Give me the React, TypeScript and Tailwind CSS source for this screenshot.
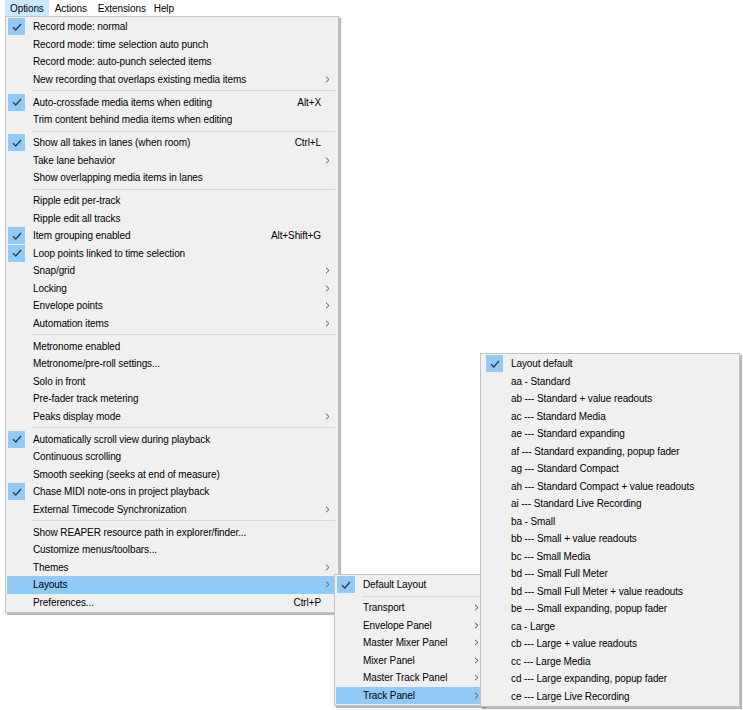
import type { ReactNode } from 'react'

type Item =
  | { sep: true }
  | { sep?: false; label: string; checked?: boolean; shortcut?: string; sub?: boolean; active?: boolean }

const optionsMenu: Item[] = [
  { label: 'Record mode: normal', checked: true },
  { label: 'Record mode: time selection auto punch' },
  { label: 'Record mode: auto-punch selected items' },
  { label: 'New recording that overlaps existing media items', sub: true },
  { sep: true },
  { label: 'Auto-crossfade media items when editing', checked: true, shortcut: 'Alt+X' },
  { label: 'Trim content behind media items when editing' },
  { sep: true },
  { label: 'Show all takes in lanes (when room)', checked: true, shortcut: 'Ctrl+L' },
  { label: 'Take lane behavior', sub: true },
  { label: 'Show overlapping media items in lanes' },
  { sep: true },
  { label: 'Ripple edit per-track' },
  { label: 'Ripple edit all tracks' },
  { label: 'Item grouping enabled', checked: true, shortcut: 'Alt+Shift+G' },
  { label: 'Loop points linked to time selection', checked: true },
  { label: 'Snap/grid', sub: true },
  { label: 'Locking', sub: true },
  { label: 'Envelope points', sub: true },
  { label: 'Automation items', sub: true },
  { sep: true },
  { label: 'Metronome enabled' },
  { label: 'Metronome/pre-roll settings...' },
  { label: 'Solo in front' },
  { label: 'Pre-fader track metering' },
  { label: 'Peaks display mode', sub: true },
  { sep: true },
  { label: 'Automatically scroll view during playback', checked: true },
  { label: 'Continuous scrolling' },
  { label: 'Smooth seeking (seeks at end of measure)' },
  { label: 'Chase MIDI note-ons in project playback', checked: true },
  { label: 'External Timecode Synchronization', sub: true },
  { sep: true },
  { label: 'Show REAPER resource path in explorer/finder...' },
  { label: 'Customize menus/toolbars...' },
  { label: 'Themes', sub: true },
  { label: 'Layouts', sub: true, active: true },
  { label: 'Preferences...', shortcut: 'Ctrl+P' },
]

const layoutsMenu: Item[] = [
  { label: 'Default Layout', checked: true },
  { sep: true },
  { label: 'Transport', sub: true },
  { label: 'Envelope Panel', sub: true },
  { label: 'Master Mixer Panel', sub: true },
  { label: 'Mixer Panel', sub: true },
  { label: 'Master Track Panel', sub: true },
  { label: 'Track Panel', sub: true, active: true },
]

const trackPanelMenu: Item[] = [
  { label: 'Layout default', checked: true },
  { label: 'aa - Standard' },
  { label: 'ab --- Standard + value readouts' },
  { label: 'ac --- Standard Media' },
  { label: 'ae --- Standard expanding' },
  { label: 'af --- Standard expanding, popup fader' },
  { label: 'ag --- Standard Compact' },
  { label: 'ah --- Standard Compact + value readouts' },
  { label: 'ai --- Standard Live Recording' },
  { label: 'ba - Small' },
  { label: 'bb --- Small + value readouts' },
  { label: 'bc --- Small Media' },
  { label: 'bd --- Small Full Meter' },
  { label: 'bd --- Small Full Meter + value readouts' },
  { label: 'be --- Small expanding, popup fader' },
  { label: 'ca - Large' },
  { label: 'cb --- Large + value readouts' },
  { label: 'cc --- Large Media' },
  { label: 'cd --- Large expanding, popup fader' },
  { label: 'ce --- Large Live Recording' },
]

function Check() {
  return (
    <svg width="10" height="8" viewBox="0 0 10 8" fill="none">
      <path d="M1 4.2 L3.8 7 L9 1" stroke="#2d3a4a" strokeWidth="1.3" />
    </svg>
  )
}

function Chevron() {
  return (
    <svg width="5" height="7" viewBox="0 0 5 7" fill="none">
      <path d="M1 0.8 L4 3.5 L1 6.2" stroke="#555" strokeWidth="1" />
    </svg>
  )
}

// Popup menu: check gutter, label, optional shortcut and submenu arrow
function Menu({
  items,
  gutter,
  box,
  arrow,
}: {
  items: Item[]
  gutter: string
  box: string
  arrow: string
}) {
  return (
    <div className="flex flex-col border border-[#c4c4c4] bg-[#f0f0f0] py-px shadow-[2px_2px_1px_rgba(0,0,0,0.28)]">
      {items.map((it, i) =>
        it.sep ? (
          <div key={i} className="flex h-[5.5px] items-center pr-[3px]">
            <div className={`${gutter} shrink-0`} />
            <div className="h-px flex-1 bg-[#d9d9d9]" />
          </div>
        ) : (
          <div
            key={i}
            className={`mx-px flex h-[17.5px] items-center ${it.active ? 'bg-[#91c9f7]' : ''}`}
          >
            <div className={`${gutter} flex h-full shrink-0 items-center`}>
              {it.checked && (
                <div className={`${box} flex h-[17px] items-center justify-center bg-[#91c9f7]`}>
                  <Check />
                </div>
              )}
            </div>
            <span className="flex-1 whitespace-nowrap">{it.label}</span>
            {it.shortcut && <span className="whitespace-nowrap">{it.shortcut}</span>}
            <div className={`flex w-[16px] shrink-0 items-center ${arrow}`}>
              {it.sub && <Chevron />}
            </div>
          </div>
        ),
      )}
    </div>
  )
}

function Pos({ className, children }: { className: string; children: ReactNode }) {
  return <div className={`absolute ${className}`}>{children}</div>
}

export default function App() {
  return (
    <div
      className="relative h-[710px] w-[743px] overflow-hidden bg-white text-[10px] tracking-[-0.1px] text-black"
      style={{ fontFamily: '"Liberation Sans", Arial, sans-serif' }}
    >
      <div className="flex h-[16px] items-center pl-[5px]">
        <div className="flex h-full items-center bg-[#cce8ff] px-[5px]">Options</div>
        <div className="px-[6px]">Actions</div>
        <div className="pl-[5px] pr-[3px]">Extensions</div>
        <div className="px-[5px]">Help</div>
      </div>

      <div className="ml-[5px] w-[334px]">
        <Menu items={optionsMenu} gutter="w-[26px] pl-px" box="w-[17px]" arrow="pl-[4px]" />
      </div>

      <Pos className="left-[334px] top-[574px] w-[150px]">
        <Menu items={layoutsMenu} gutter="w-[27px] pl-px" box="w-[18px]" arrow="pl-[8px]" />
      </Pos>

      <Pos className="left-[480px] top-[353px] w-[260px]">
        <Menu items={trackPanelMenu} gutter="w-[29px] pl-[4px]" box="w-[17px]" arrow="pl-[4px]" />
      </Pos>
    </div>
  )
}
